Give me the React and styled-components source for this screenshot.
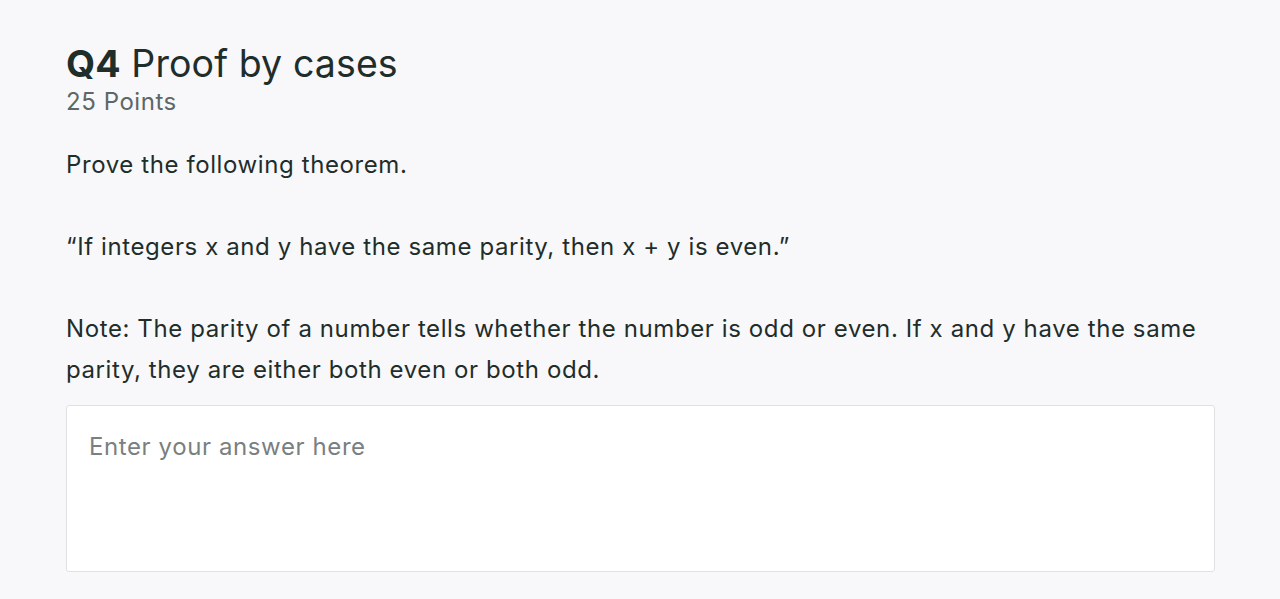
import React from 'react'
import styled, { createGlobalStyle } from 'styled-components'

const GlobalStyle = createGlobalStyle`
  html, body {
    margin: 0;
    padding: 0;
    background: #f8f8fa;
  }
  body {
    font-family: Inter, Lato, sans-serif;
    color: #1f2d2b;
  }
`

const Page = styled.div`
  padding: 40px 65px 0 66px;
  min-height: 599px;
  box-sizing: border-box;
`

const Header = styled.header`
  display: flex;
  flex-direction: column;
`

const Title = styled.h1`
  margin: 0;
  font-size: 37.5px;
  line-height: 47px;
  font-weight: 400;
  letter-spacing: 0.1px;
  color: #1f2d2b;
`

const Number = styled.span`
  font-weight: 700;
`

const Points = styled.div`
  font-size: 24px;
  line-height: 30px;
  letter-spacing: 0.55px;
  color: #5d6766;
`

const Body = styled.div`
  margin-top: 27px;
`

const Paragraph = styled.p`
  margin: 0 0 41px;
  font-size: 24px;
  line-height: 41px;
  letter-spacing: 0.6px;
  &:last-child {
    margin-bottom: 0;
  }
`

const Answer = styled.textarea`
  display: block;
  width: 100%;
  height: 167px;
  margin-top: 15px;
  box-sizing: border-box;
  padding: 26px 22px;
  border: 1px solid #e1e1e5;
  border-radius: 3px;
  background: #fff;
  font-family: inherit;
  font-size: 24px;
  line-height: 30px;
  letter-spacing: 0.6px;
  color: #1f2d2b;
  resize: none;
  outline: none;
  &::placeholder {
    color: #7a7f7f;
  }
`

export default function App() {
  return (
    <>
      <GlobalStyle />
      <Page>
        <Header>
          <Title>
            <Number>Q4</Number> Proof by cases
          </Title>
          <Points>25 Points</Points>
        </Header>
        <Body>
          <Paragraph>Prove the following theorem.</Paragraph>
          <Paragraph>“If integers x and y have the same parity, then x + y is even.”</Paragraph>
          <Paragraph>
            Note: The parity of a number tells whether the number is odd or even. If x and y have the same parity, they are either both even or both odd.
          </Paragraph>
        </Body>
        <Answer placeholder="Enter your answer here" />
      </Page>
    </>
  )
}
